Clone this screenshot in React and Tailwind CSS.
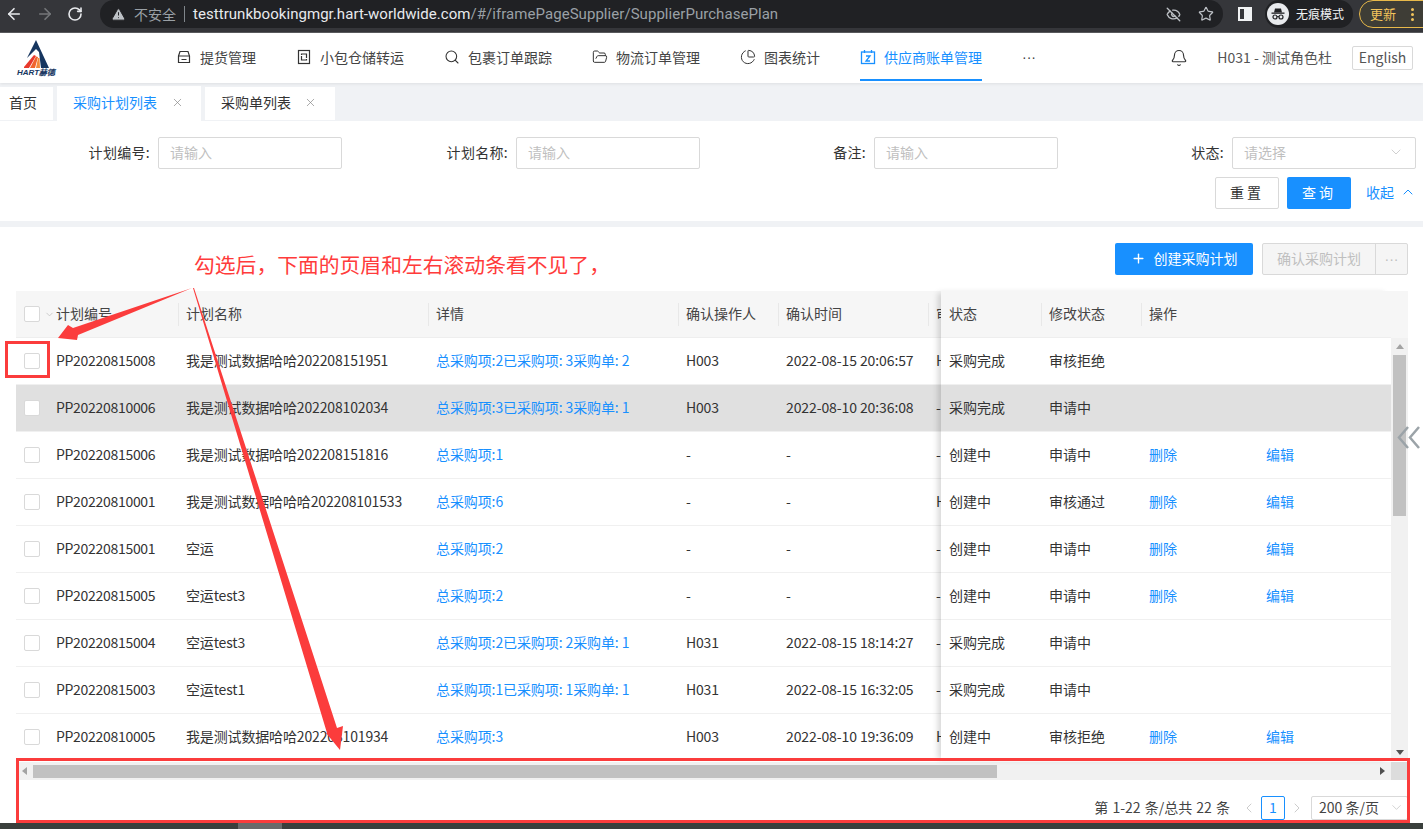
import React from "react";
import { ArrowLeft, ArrowRight, RotateCw, TriangleAlert, EyeOff, Star, Bell, Search, FolderOpen, ChartPie, Plus, ChevronDown, ChevronUp, ChevronLeft, ChevronRight, X } from "lucide-react";

const rows = [
  ["PP20220815008", "我是测试数据哈哈202208151951", "总采购项:2已采购项: 3采购单: 2", "H003", "2022-08-15 20:06:57", "H", "采购完成", "审核拒绝", false],
  ["PP20220810006", "我是测试数据哈哈202208102034", "总采购项:3已采购项: 3采购单: 1", "H003", "2022-08-10 20:36:08", "-", "采购完成", "申请中", false],
  ["PP20220815006", "我是测试数据哈哈202208151816", "总采购项:1", "-", "-", "-", "创建中", "申请中", true],
  ["PP20220810001", "我是测试数据哈哈哈202208101533", "总采购项:6", "-", "-", "H", "创建中", "审核通过", true],
  ["PP20220815001", "空运", "总采购项:2", "-", "-", "-", "创建中", "申请中", true],
  ["PP20220815005", "空运test3", "总采购项:2", "-", "-", "-", "创建中", "申请中", true],
  ["PP20220815004", "空运test3", "总采购项:2已采购项: 2采购单: 1", "H031", "2022-08-15 18:14:27", "-", "采购完成", "申请中", false],
  ["PP20220815003", "空运test1", "总采购项:1已采购项: 1采购单: 1", "H031", "2022-08-15 16:32:05", "-", "采购完成", "申请中", false],
  ["PP20220810005", "我是测试数据哈哈202208101934", "总采购项:3", "H003", "2022-08-10 19:36:09", "H", "创建中", "审核拒绝", true],
];

const Check = () => <span className="block w-4 h-4 rounded-[2px] border border-[#d9d9d9] bg-white" />;
const Sep = () => <span className="absolute left-0 top-[12px] h-[23px] w-px bg-[#e8e8e8]" />;

function HeadCell({ w, children, sep = true }) {
  return (
    <div className={`relative flex items-center pl-2 pb-[2px] whitespace-nowrap overflow-hidden ${w}`}>
      {sep && <Sep />}
      {children}
    </div>
  );
}

function Cell({ w, children, className = "" }) {
  return <div className={`flex items-center pl-2 pb-[2px] whitespace-nowrap overflow-hidden ${w} ${className}`}>{children}</div>;
}

function BoxIcon() {
  return (
    <svg width="16" height="16" viewBox="0 0 16 16" fill="none" stroke="#333" strokeWidth="1.2">
      <path d="M2.5 7 4 2.5h8L13.5 7v6.5h-11z" />
      <path d="M2.5 7h11M5.5 10.5h5" />
    </svg>
  );
}
function ParcelIcon() {
  return (
    <svg width="16" height="16" viewBox="0 0 16 16" fill="none" stroke="#333" strokeWidth="1.2">
      <rect x="2.5" y="1.5" width="11" height="13" />
      <path d="M5.5 6V5h5v4M10.5 10v1h-5V7" />
    </svg>
  );
}
function LedgerIcon() {
  return (
    <svg width="16" height="16" viewBox="0 0 16 16" fill="none" stroke="#1890ff" strokeWidth="1.3">
      <rect x="1.5" y="3" width="13" height="11.5" />
      <path d="M4.5 1v3M11.5 1v3M6 7h4L6 12h4" />
    </svg>
  );
}

function Incognito() {
  return (
    <span className="flex items-center justify-center w-[22px] h-[22px] rounded-full bg-[#e8eaed]">
      <svg width="16" height="16" viewBox="0 0 16 16" fill="#202124">
        <path d="M5 2.5h6l1 4H4z" />
        <rect x="1.5" y="6.5" width="13" height="1.3" />
        <circle cx="5" cy="11" r="2" fill="none" stroke="#202124" strokeWidth="1.2" />
        <circle cx="11" cy="11" r="2" fill="none" stroke="#202124" strokeWidth="1.2" />
        <path d="M7 10.6h2" stroke="#202124" strokeWidth="1" />
      </svg>
    </span>
  );
}

function ChromeBar() {
  return (
    <div className="h-[33px] bg-[#35363a] border-b border-[#5a5b5e] flex items-start text-[#e8eaed] shrink-0 overflow-hidden">
      <div className="flex items-center w-[100px] h-[28px] pl-[5px] gap-[13px] shrink-0">
        <ArrowLeft size={18} strokeWidth={2.2} className="text-[#e8eaed]" />
        <ArrowRight size={18} strokeWidth={2.2} className="text-[#75777a]" />
        <RotateCw size={16} strokeWidth={2.4} className="text-[#e8eaed]" />
      </div>
      <div className="w-[1123px] shrink-0 h-[28px] bg-[#202124] rounded-full flex items-center pl-[11px] pr-[9px]">
        <TriangleAlert size={15} fill="#bdc1c6" stroke="#202124" strokeWidth={1.6} />
        <span className="ml-[8px] text-[14px] text-[#9aa0a6]">不安全</span>
        <span className="ml-[8px] h-[16px] w-px bg-[#80868b]" />
        <span className="ml-[8px] text-[15px] tracking-[0.05px] font-['Roboto',sans-serif] whitespace-nowrap">
          testtrunkbookingmgr.hart-worldwide.com<span className="text-[#9aa0a6]">/#/iframePageSupplier/SupplierPurchasePlan</span>
        </span>
        <div className="ml-auto flex items-center gap-[17px]">
          <EyeOff size={15} className="text-[#bdc1c6]" strokeWidth={2.2} />
          <Star size={16} className="text-[#bdc1c6]" strokeWidth={1.8} />
        </div>
      </div>
      <div className="flex items-center h-[28px] pl-[15px] shrink-0">
        <span className="flex w-[14px] h-[14px] border-2 border-[#f1f3f4]">
          <span className="w-[6px] bg-[#f1f3f4] ml-auto" />
        </span>
      </div>
      <div className="ml-[13px] w-[88px] shrink-0 h-[28px] bg-[#202124] rounded-full flex items-center pl-[2px] text-[12px]">
        <Incognito />
        <span className="ml-[7px] text-[#f1f3f4] whitespace-nowrap">无痕模式</span>
      </div>
      <div className="ml-[6px] w-[80px] shrink-0 h-[28px] border border-[#e8b94a] rounded-full flex items-center pl-[10px] text-[13px] bg-[#3e3d36] text-[#f3c45b]">
        更新
        <span className="ml-[15px] flex flex-col gap-[2px]">
          <i className="block w-[3px] h-[3px] rounded-full bg-[#f3c45b]" />
          <i className="block w-[3px] h-[3px] rounded-full bg-[#f3c45b]" />
          <i className="block w-[3px] h-[3px] rounded-full bg-[#f3c45b]" />
        </span>
      </div>
    </div>
  );
}

function Logo() {
  return (
    <div className="flex flex-col items-center w-[40px] ml-[16px]">
      <svg width="26" height="28" viewBox="0 0 26 28">
        <path d="M13 0 26 28H18L16 12 13 9 4 18Z" fill="#16365f" />
        <path d="M1 27 11 15 13 16 6 28H1Z" fill="#e8392c" />
        <path d="M7 28 13 16.5 15 17 12 28Z" fill="#f0652d" />
        <path d="M13 28 15 18 16.5 18 17 28Z" fill="#f28b3a" />
      </svg>
      <span className="text-[8px] leading-[9px] font-bold italic text-[#16365f] font-['Liberation_Sans',sans-serif] whitespace-nowrap">HART赫德</span>
    </div>
  );
}

function NavItem({ icon, label, active }) {
  return (
    <div className={`relative flex items-center h-full gap-[8px] pb-[2px] ${active ? "text-[#1890ff]" : "text-[#444]"}`}>
      {icon}
      <span>{label}</span>
      {active && <span className="absolute left-0 right-0 bottom-[2px] h-[2px] bg-[#1890ff]" />}
    </div>
  );
}

function TopNav() {
  return (
    <div className="h-[50px] bg-white flex items-center shrink-0 shadow-[0_1px_3px_rgba(0,0,0,0.08)] relative">
      <div className="w-[176px] shrink-0"><Logo /></div>
      <div className="flex items-center h-full gap-[40px]">
        <NavItem icon={<BoxIcon />} label="提货管理" />
        <NavItem icon={<ParcelIcon />} label="小包仓储转运" />
        <NavItem icon={<Search size={16} strokeWidth={1.6} className="text-[#333]" />} label="包裹订单跟踪" />
        <NavItem icon={<FolderOpen size={16} strokeWidth={1.5} className="text-[#333]" />} label="物流订单管理" />
        <NavItem icon={<ChartPie size={16} strokeWidth={1.5} className="text-[#333]" />} label="图表统计" />
        <NavItem icon={<LedgerIcon />} label="供应商账单管理" active />
        <span className="text-[#444] font-['Liberation_Sans',sans-serif] pb-[2px]">···</span>
      </div>
      <div className="ml-auto flex items-center pr-[10px] pb-[1px] text-[#555]">
        <Bell size={18} strokeWidth={1.5} className="text-[#333]" />
        <span className="ml-[29px]">H031 - 测试角色杜</span>
        <span className="ml-[20px] h-[24px] w-[61px] flex items-center justify-center border border-[#d9d9d9] rounded-[2px]">English</span>
      </div>
    </div>
  );
}

function Tabs() {
  return (
    <div className="h-[38px] bg-[#f0f2f5] flex items-end shrink-0">
      <div className="h-[34px] w-[53px] bg-white flex items-center pl-[9px] pb-[2px] text-[#333] border-b border-[#f0f2f5]">首页</div>
      <div className="ml-[4px] h-[35px] w-[144px] bg-white flex items-center pl-[16px] pb-[2px] text-[#1890ff]">
        采购计划列表
        <X size={13} strokeWidth={1.3} className="ml-[14px] text-[#888]" />
      </div>
      <div className="ml-[4px] h-[34px] w-[130px] bg-white flex items-center pl-[16px] pb-[2px] text-[#333] border-b border-[#f0f2f5]">
        采购单列表
        <X size={13} strokeWidth={1.3} className="ml-[13px] text-[#888]" />
      </div>
    </div>
  );
}

function Field({ label, placeholder, select }) {
  return (
    <div className="flex items-center justify-end">
      <span className="text-[#333] mr-[8px] pb-[2px] tracking-[0.3px]">{label}:</span>
      <div className="w-[184px] h-[32px] border border-[#d9d9d9] rounded-[2px] flex items-center px-[11px] pb-[2px] text-[#bfbfbf] bg-white">
        {placeholder}
        {select && <ChevronDown size={16} strokeWidth={1.1} className="ml-auto text-[#bfbfbf]" />}
      </div>
    </div>
  );
}

function Filters() {
  return (
    <div className="h-[100px] bg-white pt-[16px] shrink-0">
      <div className="grid grid-cols-[342px_358px_358px_358px]">
        <Field label="计划编号" placeholder="请输入" />
        <Field label="计划名称" placeholder="请输入" />
        <Field label="备注" placeholder="请输入" />
        <Field label="状态" placeholder="请选择" select />
      </div>
      <div className="flex items-center justify-end mt-[8px] pr-[7px]">
        <button className="w-[64px] h-[32px] border border-[#d9d9d9] rounded-[2px] bg-white text-[#333] tracking-[3px] pb-[2px]">重置</button>
        <button className="ml-[8px] w-[64px] h-[32px] rounded-[2px] bg-[#1890ff] text-white tracking-[3px] pb-[2px]">查询</button>
        <span className="ml-[15px] flex items-center text-[#1890ff] gap-[6px] pb-[2px]">收起<ChevronUp size={16} strokeWidth={1.5} /></span>
      </div>
    </div>
  );
}

function Toolbar() {
  return (
    <div className="flex justify-end pr-[15px] pt-[16px] h-[64px]">
      <button className="w-[138px] h-[32px] rounded-[2px] bg-[#1890ff] text-white flex items-center justify-center gap-[8px] pb-[1px]">
        <Plus size={15} strokeWidth={2.2} />创建采购计划
      </button>
      <div className="ml-[9px] h-[32px] w-[146px] flex border border-[#d9d9d9] rounded-[2px] bg-[#f5f5f5] text-[#bfbfbf]">
        <span className="flex-1 flex items-center justify-center border-r border-[#d9d9d9] pb-[1px]">确认采购计划</span>
        <span className="w-[31px] flex items-center justify-center font-['Liberation_Sans',sans-serif]">···</span>
      </div>
    </div>
  );
}

function TableBlock() {
  return (
    <div className="flex ml-[16px] mr-[15px]">
      {/* 可滚动列 */}
      <div className="w-[925px] shrink-0 overflow-hidden">
        <div className="flex h-[47px] bg-[#f6f6f6] border-b border-[#eeeeee] text-[#444]">
          <div className="relative w-[32px] shrink-0 pl-[8px] flex items-center">
            <Check />
            <ChevronDown size={11} strokeWidth={1.5} className="absolute left-[28px] top-[18px] text-[#bbb]" />
          </div>
          <HeadCell w="w-[130px] shrink-0" sep={false}>计划编号</HeadCell>
          <HeadCell w="w-[250px] shrink-0">计划名称</HeadCell>
          <HeadCell w="w-[250px] shrink-0">详情</HeadCell>
          <HeadCell w="w-[100px] shrink-0">确认操作人</HeadCell>
          <HeadCell w="w-[150px] shrink-0">确认时间</HeadCell>
          <HeadCell w="w-[13px] shrink-0">审</HeadCell>
        </div>
        {rows.map((r, i) => (
          <div key={r[0]} className={`flex h-[47px] border-b border-[#f0f0f0] text-[#333] ${i === 1 ? "bg-[#e0e0e0]" : "bg-white"}`}>
            <div className="w-[32px] shrink-0 pl-[8px] flex items-center"><Check /></div>
            <Cell w="w-[130px] shrink-0" className="tracking-[-0.3px]">{r[0]}</Cell>
            <Cell w="w-[250px] shrink-0" className="tracking-[-0.15px]">{r[1]}</Cell>
            <Cell w="w-[250px] shrink-0" className="text-[#1890ff] tracking-[-0.1px]">{r[2]}</Cell>
            <Cell w="w-[100px] shrink-0" className="tracking-[-0.2px]">{r[3]}</Cell>
            <Cell w="w-[150px] shrink-0" className="tracking-[-0.1px]">{r[4]}</Cell>
            <Cell w="w-[13px] shrink-0">{r[5]}</Cell>
          </div>
        ))}
      </div>
      {/* 固定列 */}
      <div className="w-[450px] shrink-0 relative shadow-[-5px_0_6px_-2px_rgba(0,0,0,0.16)]">
        <div className="flex h-[47px] bg-[#f6f6f6] border-b border-[#eeeeee] text-[#444]">
          <HeadCell w="w-[100px]" sep={false}>状态</HeadCell>
          <HeadCell w="w-[100px]">修改状态</HeadCell>
          <HeadCell w="w-[250px]">操作</HeadCell>
        </div>
        {rows.map((r, i) => (
          <div key={r[0]} className={`flex h-[47px] border-b border-[#f0f0f0] text-[#333] ${i === 1 ? "bg-[#e0e0e0]" : "bg-white"}`}>
            <Cell w="w-[100px]">{r[6]}</Cell>
            <Cell w="w-[100px]">{r[7]}</Cell>
            {r[8] && <Cell w="w-[117px]" className="text-[#1890ff]">删除</Cell>}
            {r[8] && <Cell w="w-[100px]" className="text-[#1890ff]">编辑</Cell>}
          </div>
        ))}
      </div>
      {/* 纵向滚动条 */}
      <div className="w-[17px] shrink-0">
        <div className="h-[47px] bg-[#f6f6f6]" />
        <div className="h-[423px] bg-[#f1f1f1] flex flex-col items-center">
          <span className="h-[17px] flex items-center"><span className="w-0 h-0 border-x-[4px] border-x-transparent border-b-[5px] border-b-[#a3a3a3]" /></span>
          <span className="w-[13px] h-[161px] bg-[#c1c1c1]" />
          <span className="mt-auto h-[17px] flex items-center"><span className="w-0 h-0 border-x-[4px] border-x-transparent border-t-[5px] border-t-[#505050]" /></span>
        </div>
      </div>
    </div>
  );
}

function HScroll() {
  return (
    <div className="flex ml-[16px] mr-[15px] h-[18px] mt-[1px] bg-[#f1f1f1]">
      <span className="w-[17px] flex items-center justify-center"><span className="w-0 h-0 border-y-[4px] border-y-transparent border-r-[5px] border-r-[#a3a3a3]" /></span>
      <span className="w-[964px] h-[13px] my-auto bg-[#c1c1c1]" />
      <span className="ml-auto w-[17px] flex items-center justify-center"><span className="w-0 h-0 border-y-[4px] border-y-transparent border-l-[5px] border-l-[#505050]" /></span>
      <span className="w-[17px] bg-[#dcdcdc]" />
    </div>
  );
}

function Pagination() {
  return (
    <div className="flex items-center justify-end pr-[15px] mt-[16px] h-[24px] text-[#444]">
      <span className="mr-[11px] pb-[2px] [word-spacing:1px]">第 1-22 条/总共 22 条</span>
      <ChevronLeft size={16} strokeWidth={1.3} className="text-[#c4c4c4]" />
      <span className="ml-[4px] w-[24px] h-[24px] flex items-center justify-center border border-[#1890ff] rounded-[2px] text-[#1890ff] pb-[1px]">1</span>
      <ChevronRight size={16} strokeWidth={1.3} className="ml-[4px] text-[#c4c4c4]" />
      <div className="ml-[6px] w-[97px] h-[24px] border border-[#d9d9d9] rounded-[2px] flex items-center pl-[7px] pb-[1px]">
        200 条/页
        <ChevronDown size={15} strokeWidth={1.1} className="ml-auto mr-[3px] text-[#bfbfbf]" />
      </div>
    </div>
  );
}

function Annotations() {
  return (
    <>
      <div className="absolute left-[194px] top-[250px] text-[20.8px] leading-[28px] text-[#ff3b3b] whitespace-nowrap">勾选后，下面的页眉和左右滚动条看不见了，</div>
      <svg className="absolute left-0 top-0 pointer-events-none" width="1423" height="829">
        <polygon points="192,288 78,335 77,340 58,338 68,325 73,328" fill="#fb3c3c" />
        <polygon points="193,288 194,288 337,728 343,726 340,750 326,733 327,733" fill="#fb3c3c" />
      </svg>
      <div className="absolute left-[5px] top-[341px] w-[45px] h-[37px] border-[3px] border-[#fb3c3c]" />
      <div className="absolute left-[16px] top-[758px] w-[1394px] h-[65px] border-[3px] border-[#fb3c3c]" />
      <svg className="absolute left-[1397px] top-[426px]" width="24" height="23" viewBox="0 0 24 23" fill="none" stroke="#9ba3a8" strokeWidth="2.5">
        <path d="M11 1 2 11.5 11 22M22 1 13 11.5 22 22" />
      </svg>
    </>
  );
}

export default function App() {
  return (
    <div className="relative w-[1423px] h-[829px] overflow-hidden bg-white flex flex-col text-[14px] font-['Noto_Sans_CJK_SC','Noto_Sans',sans-serif]">
      <ChromeBar />
      <TopNav />
      <Tabs />
      <Filters />
      <div className="h-[6px] bg-[#f0f2f5] shrink-0" />
      <div className="flex-1 flex flex-col bg-white">
        <Toolbar />
        <TableBlock />
        <HScroll />
        <Pagination />
        <div className="mt-auto h-[6px] bg-[#3a3f3c] flex">
          <span className="ml-[238px] w-[44px] bg-[#6a6a6a]" />
        </div>
      </div>
      <Annotations />
    </div>
  );
}
